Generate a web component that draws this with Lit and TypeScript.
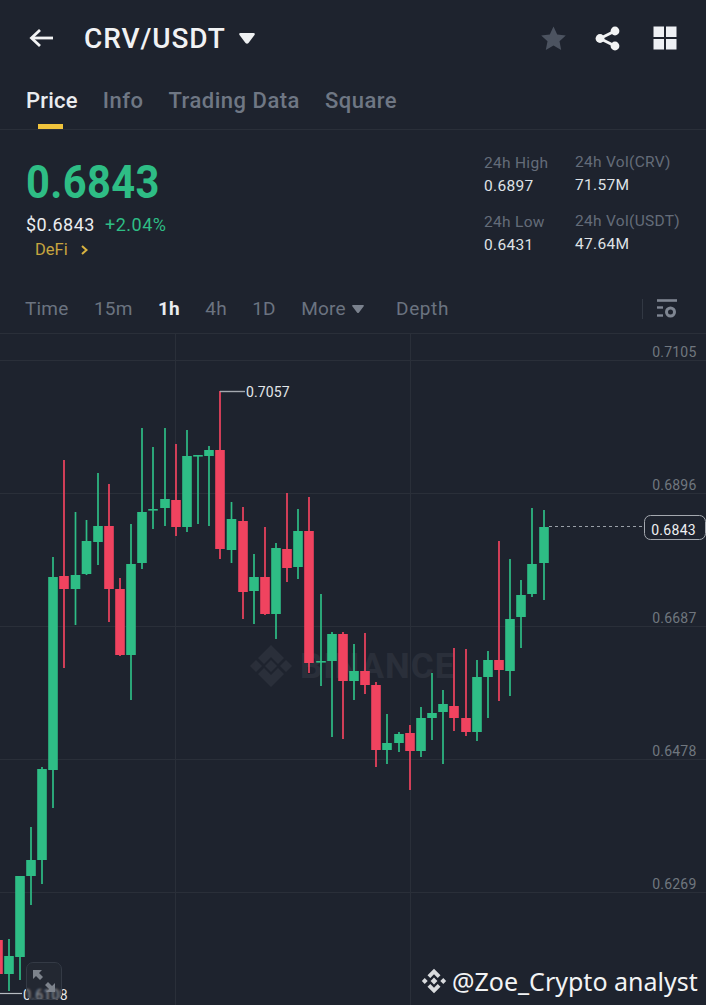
import { LitElement, html, css, svg, unsafeCSS } from "lit";
import { customElement } from "lit/decorators.js";

type Candle = [number, "g" | "r", number, number, number, number];
// x, colour, wickTop, bodyTop, bodyBottom, wickBottom (page coordinates)
const CANDLES: Candle[] = [
  [-2, "r", 940, 940, 974, 974],
  [9, "g", 939, 956, 974, 991],
  [20, "g", 876, 876, 957, 980],
  [31, "g", 827, 860, 876, 905],
  [42, "g", 767, 769, 860, 884],
  [53, "g", 557, 577, 770, 808],
  [64, "r", 460, 576, 589, 668],
  [75.5, "g", 512, 575, 589, 625],
  [86.5, "g", 520, 541, 574, 575],
  [98, "g", 473, 526, 542, 565],
  [109, "r", 484, 526, 589, 622],
  [120, "r", 578, 589, 655, 656],
  [131, "g", 524, 564, 655, 700],
  [142, "g", 428, 512, 563, 569],
  [153, "g", 447, 509, 510, 529],
  [165, "g", 428, 499, 508, 526],
  [176, "r", 444, 500, 527, 536],
  [187, "g", 430, 456, 527, 532],
  [198, "g", 455, 455, 456, 524],
  [209, "g", 446, 450, 456, 526],
  [220, "r", 391, 450, 549, 559],
  [231.5, "g", 502, 519, 550, 563],
  [243, "r", 507, 521, 592, 619],
  [254, "g", 554, 577, 591, 624],
  [265, "r", 527, 577, 614, 615],
  [276, "g", 543, 548, 614, 639],
  [287, "r", 493, 549, 568, 582],
  [298, "g", 509, 531, 567, 579],
  [309, "r", 497, 531, 663, 673],
  [321, "g", 594, 661, 662, 686],
  [332, "g", 632, 634, 661, 737],
  [343, "r", 632, 634, 681, 739],
  [354, "g", 644, 671, 681, 700],
  [365, "r", 633, 671, 685, 694],
  [376, "r", 682, 685, 750, 767],
  [387, "g", 714, 743, 750, 764],
  [399, "g", 732, 734, 743, 752],
  [410, "r", 725, 733, 751, 790],
  [421, "g", 707, 718, 751, 757],
  [432, "g", 673, 713, 718, 740],
  [443, "g", 690, 704, 712, 764],
  [454, "r", 648, 706, 718, 731],
  [466, "r", 649, 718, 732, 736],
  [477, "g", 660, 677, 732, 741],
  [488, "g", 651, 660, 677, 718],
  [499, "r", 541, 660, 670, 701],
  [510, "g", 559, 619, 671, 696],
  [521, "g", 580, 595, 617, 648],
  [532, "g", 508, 564, 594, 597],
  [544, "g", 510, 527, 563, 600],
];

const TOP = 334;
const GREEN = "#2ebd85";
const RED = "#f0435f";
const GRID_Y = [360, 493, 626, 759, 892];
const LABELS: [string, number][] = [
  ["0.7105", 352],
  ["0.6896", 485],
  ["0.6687", 618],
  ["0.6478", 751],
  ["0.6269", 884],
];

@customElement("app-root")
export class AppRoot extends LitElement {
  static styles = css`
    :host {
      display: block;
      width: 706px;
      height: 1005px;
      overflow: hidden;
      background: #1e232e;
      font-family: Roboto, "Noto Sans", sans-serif;
      color: #eaecef;
    }
    .header {
      height: 76px;
      display: flex;
      align-items: center;
      padding: 0 29px;
    }
    .header svg { display: block; flex: none; }
    .title {
      margin-left: 31px;
      font-size: 28px;
      font-weight: 500;
      letter-spacing: 0.9px;
      color: #f1f2f4;
    }
    .caret { margin-left: 13px; }
    .actions {
      margin-left: auto;
      display: flex;
      align-items: center;
      gap: 29px;
    }
    .actions .grid { margin-left: 4px; }
    .tabs {
      height: 54px;
      box-sizing: border-box;
      display: flex;
      gap: 25px;
      padding: 10px 0 0 26px;
      border-bottom: 1px solid #2a2f39;
      font-size: 22px;
      font-weight: 500;
      color: #6f7784;
      line-height: 30px;
    }
    .tab { position: relative; letter-spacing: 0.5px; }
    .tab.on { color: #eaecef; letter-spacing: 0.2px; }
    .tab.on::after {
      content: "";
      position: absolute;
      left: 12px;
      top: 38px;
      width: 25px;
      height: 5px;
      background: #f0c33c;
    }
    .summary {
      height: 150px;
      box-sizing: border-box;
      display: flex;
      justify-content: space-between;
      padding: 26px 0 0 26px;
    }
    .price {
      font-size: 46px;
      line-height: 52px;
      font-weight: 700;
      color: ${unsafeCSS(GREEN)};
      letter-spacing: 0.4px;
      transform: scaleX(0.905);
      transform-origin: left center;
    }
    .sub {
      display: flex;
      gap: 10px;
      margin-top: 5px;
      font-size: 18px;
      line-height: 24px;
      letter-spacing: 0.5px;
    }
    .up { color: ${unsafeCSS(GREEN)}; }
    .tag {
      display: flex;
      align-items: center;
      gap: 13px;
      margin: 2px 0 0 9px;
      font-size: 16.5px;
      line-height: 22px;
      color: #c6a53f;
    }
    .stats {
      display: grid;
      grid-template-columns: 91px 131px;
      grid-auto-rows: 59px;
      margin-top: -4px;
      font-size: 15.5px;
      line-height: 23px;
      letter-spacing: 0.3px;
    }
    .stat .k { color: #646c79; }
    .stat .v { color: #dfe2e6; }
    .stat.hi { margin-top: -1px; }
    .toolbar {
      height: 54px;
      box-sizing: border-box;
      display: flex;
      align-items: center;
      gap: 25.4px;
      padding: 4px 28px 0 25px;
      border-bottom: 1px solid #2a2f39;
      font-size: 19px;
      letter-spacing: 0.2px;
      color: #6b7380;
    }
    .toolbar .active { color: #eaecef; font-weight: 700; }
    .more { display: flex; align-items: center; gap: 6px; margin-right: 7px; }
    .depth { letter-spacing: 0.6px; }
    .tools {
      margin-left: auto;
      display: flex;
      align-items: center;
      padding-left: 14px;
      border-left: 1px solid #323843;
      height: 20px;
    }
    .chart {
      display: block;
      width: 706px;
      height: 671px;
    }
    .chart text {
      font-family: Roboto, "Noto Sans", sans-serif;
    }
    .expand {
      position: absolute;
      left: 26px;
      top: 628px;
      width: 36px;
      height: 38px;
      box-sizing: border-box;
      display: flex;
      align-items: center;
      justify-content: center;
      border: 1px solid #343a45;
      border-radius: 7px;
      background: rgba(42, 47, 57, 0.4);
      backdrop-filter: blur(1px);
    }
    .mark {
      position: absolute;
      left: 421px;
      top: 631px;
      display: flex;
      align-items: center;
      gap: 5px;
      font-family: "Noto Sans", sans-serif;
      font-size: 25px;
      line-height: 32px;
      color: #f2f3f4;
      white-space: nowrap;
    }
    .body { position: relative; }
  `;

  private stat(k: string, v: string, hi = false) {
    return html`<div class="stat ${hi ? "hi" : ""}">
      <div class="k">${k}</div>
      <div class="v">${v}</div>
    </div>`;
  }

  private candle([x, c, wt, bt, bb, wb]: Candle) {
    const col = c === "g" ? GREEN : RED;
    return svg`
      <line x1=${x} x2=${x} y1=${wt - TOP} y2=${wb - TOP} stroke=${col} stroke-width="1.7" />
      <rect x=${x - 4.8} y=${bt - TOP} width="9.6" height=${Math.max(bb - bt, 1.6)} fill=${col} />
    `;
  }

  private chart() {
    return html`<svg class="chart" viewBox="0 0 706 671" width="706" height="671">
      ${GRID_Y.map(
        (y) => svg`<line x1="0" x2="706" y1=${y - TOP + 0.5} y2=${y - TOP + 0.5} stroke="#2a2f39" />`
      )}
      <line x1="175.5" x2="175.5" y1="0" y2="671" stroke="#2a2f39" />
      <line x1="410.5" x2="410.5" y1="0" y2="671" stroke="#2a2f39" />
      <g transform="translate(250 ${645 - TOP})" opacity="0.06" fill="#eaecef">
        <path d="M21 0 L34 13 L28 19 L21 12 L14 19 L8 13 Z" />
        <path d="M21 42 L34 29 L28 23 L21 30 L14 23 L8 29 Z" />
        <path d="M0 21 L6 15 L12 21 L6 27 Z" />
        <path d="M30 21 L36 15 L42 21 L36 27 Z" />
        <path d="M21 15 L27 21 L21 27 L15 21 Z" />
      </g>
      <text x="300" y=${678 - TOP} font-size="35" font-weight="700" fill="#eaecef" opacity="0.06" letter-spacing="1">BINANCE</text>
      ${CANDLES.map((c) => this.candle(c))}
      <path d="M220 ${391.5 - TOP} H245" stroke="#a4a8af" stroke-width="1.4" fill="none" />
      <text x="246" y=${397 - TOP} font-size="14" fill="#e4e6e9" letter-spacing="0.1">0.7057</text>
      <line x1="549" x2="644" y1=${526.5 - TOP} y2=${526.5 - TOP} stroke="#9aa0a8" stroke-dasharray="3 3" />
      <rect x="644.5" y=${515.5 - TOP} width="61" height="24" rx="6" fill="#1e232e" stroke="#a4a8af" stroke-width="1" />
      <text x="696" y=${535 - TOP} text-anchor="end" font-size="14" fill="#eef0f2" letter-spacing="0.3">0.6843</text>
      ${LABELS.map(
        ([t, y]) =>
          svg`<text x="696.5" y=${y + 5 - TOP} text-anchor="end" font-size="14" fill="#70777f" letter-spacing="0.2">${t}</text>`
      )}
      <line x1="0" x2="22" y1=${993.5 - TOP} y2=${993.5 - TOP} stroke="#b8bcc2" stroke-width="1.2" />
      <text x="23" y=${1000 - TOP} font-size="14" fill="#e4e6e9" letter-spacing="0.3">0.6108</text>
    </svg>`;
  }

  render() {
    return html`
      <div class="header">
        <svg width="24" height="20" viewBox="0 0 24 20" fill="none" stroke="#f2f3f4" stroke-width="2.8">
          <path d="M24 10 H3" />
          <path d="M11 2 L2.5 10 L11 18" />
        </svg>
        <span class="title">CRV/USDT</span>
        <svg class="caret" width="16" height="11" viewBox="0 0 16 11" fill="#eef0f2">
          <path d="M1.5 0 H14.5 Q16.5 0 15.5 2 L9.5 10 Q8 11.5 6.5 10 L0.5 2 Q-0.5 0 1.5 0 Z" />
        </svg>
        <div class="actions">
          <svg width="25" height="25" viewBox="0 0 25 25" fill="#4c5360">
            <path d="M12.5 0.5 L16.2 8.4 L24.8 9.4 L18.5 15.3 L20.2 23.9 L12.5 19.6 L4.8 23.9 L6.5 15.3 L0.2 9.4 L8.8 8.4 Z" />
          </svg>
          <svg width="25" height="25" viewBox="0 0 25 25" fill="#f2f3f4" stroke="#f2f3f4">
            <line x1="5" y1="12.5" x2="20" y2="5" stroke-width="3" />
            <line x1="5" y1="12.5" x2="20" y2="20" stroke-width="3" />
            <circle cx="5" cy="12.5" r="4.4" stroke="none" />
            <circle cx="20" cy="5" r="4.4" stroke="none" />
            <circle cx="20" cy="20" r="4.4" stroke="none" />
          </svg>
          <svg class="grid" width="24" height="24" viewBox="0 0 24 24" fill="#eef0f4">
            <rect x="0.5" y="0.5" width="10.5" height="10.5" />
            <rect x="13" y="0.5" width="10.5" height="10.5" />
            <rect x="0.5" y="13" width="10.5" height="10.5" />
            <rect x="13" y="13" width="10.5" height="10.5" />
          </svg>
        </div>
      </div>
      <div class="tabs">
        <span class="tab on">Price</span>
        <span class="tab">Info</span>
        <span class="tab">Trading Data</span>
        <span class="tab">Square</span>
      </div>
      <div class="summary">
        <div>
          <div class="price">0.6843</div>
          <div class="sub"><span>$0.6843</span><span class="up">+2.04%</span></div>
          <div class="tag">
            <span>DeFi</span>
            <svg width="7" height="10" viewBox="0 0 7 10" fill="none" stroke="#d9b340" stroke-width="2">
              <path d="M1 1 L5.5 5 L1 9" />
            </svg>
          </div>
        </div>
        <div class="stats">
          ${this.stat("24h High", "0.6897")}
          ${this.stat("24h Vol(CRV)", "71.57M", true)}
          ${this.stat("24h Low", "0.6431")}
          ${this.stat("24h Vol(USDT)", "47.64M", true)}
        </div>
      </div>
      <div class="toolbar">
        <span>Time</span>
        <span>15m</span>
        <span class="active">1h</span>
        <span>4h</span>
        <span>1D</span>
        <span class="more">More
          <svg width="12" height="8" viewBox="0 0 12 8" fill="#7a818d"><path d="M1 0 H11 Q12.5 0 11.5 1.5 L7 7.5 Q6 8.5 5 7.5 L0.5 1.5 Q-0.5 0 1 0 Z" /></svg>
        </span>
        <span class="depth">Depth</span>
        <span class="tools">
          <svg width="21" height="20" viewBox="0 0 21 20" fill="none" stroke="#7f8692">
            <path d="M0 1.5 H20" stroke-width="2.6" />
            <path d="M0 8.5 H6" stroke-width="2.4" />
            <path d="M0 16.5 H6" stroke-width="2.4" />
            <circle cx="13.5" cy="13" r="4" stroke-width="3" />
          </svg>
        </span>
      </div>
      <div class="body">
        ${this.chart()}
        <div class="expand">
          <svg width="26" height="26" viewBox="0 0 26 26" fill="#7d838c">
            <path d="M2 2 H11 L8 5 L12 9 L9 12 L5 8 L2 11 Z" />
            <path d="M24 24 H15 L18 21 L14 17 L17 14 L21 18 L24 15 Z" />
          </svg>
        </div>
        <div class="mark">
          <svg width="26" height="26" viewBox="0 0 32 32" fill="#d9dbde">
            <path d="M16 1 L24 9 L20.6 12.4 L16 7.8 L11.4 12.4 L8 9 Z" />
            <path d="M16 31 L24 23 L20.6 19.6 L16 24.2 L11.4 19.6 L8 23 Z" />
            <path d="M1 16 L4.6 12.4 L8.2 16 L4.6 19.6 Z" />
            <path d="M23.8 16 L27.4 12.4 L31 16 L27.4 19.6 Z" />
            <path d="M16 11.8 L20.2 16 L16 20.2 L11.8 16 Z" />
          </svg>
          <span>@Zoe_Crypto analyst</span>
        </div>
      </div>
    `;
  }
}
